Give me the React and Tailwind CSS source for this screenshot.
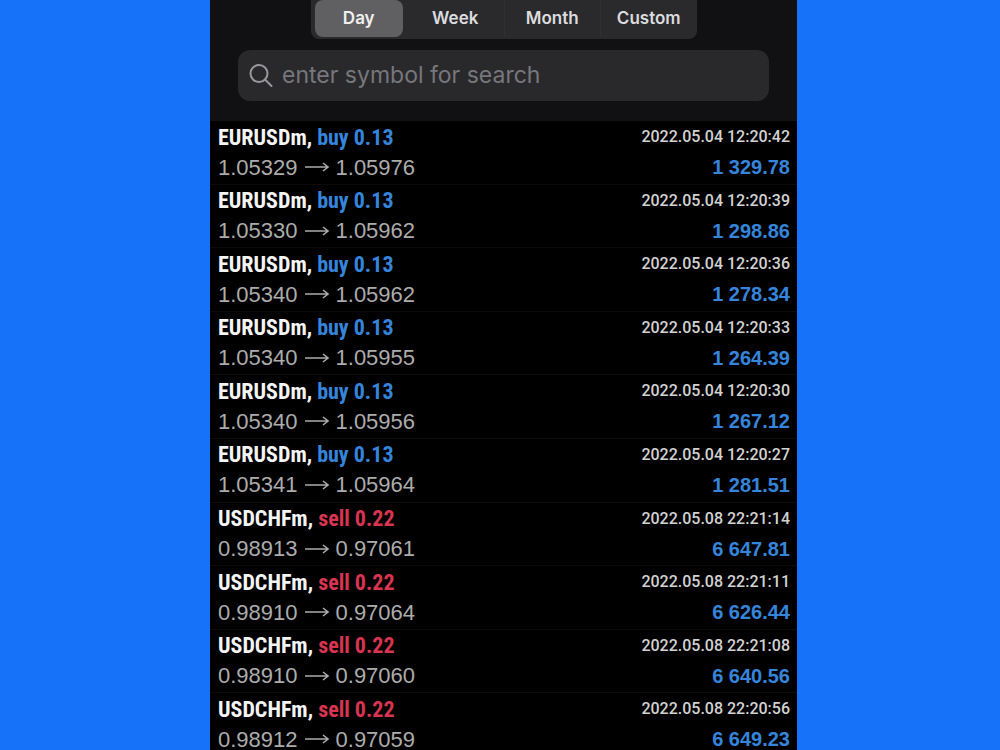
import React, { useState } from 'react';

const periods = ['Day', 'Week', 'Month', 'Custom'];

const deals = [
  { symbol: 'EURUSDm', side: 'buy', volume: '0.13', open: '1.05329', close: '1.05976', time: '2022.05.04 12:20:42', profit: '1 329.78' },
  { symbol: 'EURUSDm', side: 'buy', volume: '0.13', open: '1.05330', close: '1.05962', time: '2022.05.04 12:20:39', profit: '1 298.86' },
  { symbol: 'EURUSDm', side: 'buy', volume: '0.13', open: '1.05340', close: '1.05962', time: '2022.05.04 12:20:36', profit: '1 278.34' },
  { symbol: 'EURUSDm', side: 'buy', volume: '0.13', open: '1.05340', close: '1.05955', time: '2022.05.04 12:20:33', profit: '1 264.39' },
  { symbol: 'EURUSDm', side: 'buy', volume: '0.13', open: '1.05340', close: '1.05956', time: '2022.05.04 12:20:30', profit: '1 267.12' },
  { symbol: 'EURUSDm', side: 'buy', volume: '0.13', open: '1.05341', close: '1.05964', time: '2022.05.04 12:20:27', profit: '1 281.51' },
  { symbol: 'USDCHFm', side: 'sell', volume: '0.22', open: '0.98913', close: '0.97061', time: '2022.05.08 22:21:14', profit: '6 647.81' },
  { symbol: 'USDCHFm', side: 'sell', volume: '0.22', open: '0.98910', close: '0.97064', time: '2022.05.08 22:21:11', profit: '6 626.44' },
  { symbol: 'USDCHFm', side: 'sell', volume: '0.22', open: '0.98910', close: '0.97060', time: '2022.05.08 22:21:08', profit: '6 640.56' },
  { symbol: 'USDCHFm', side: 'sell', volume: '0.22', open: '0.98912', close: '0.97059', time: '2022.05.08 22:20:56', profit: '6 649.23' },
];

const PeriodTabs = ({ value, onChange }) => (
  <div className="mx-auto grid h-[39px] w-[386px] max-w-full grid-cols-4 rounded-b-lg bg-[#2a2a2d] pb-0.5">
    {periods.map((period, i) => (
      <button
        key={period}
        type="button"
        aria-pressed={period === value}
        onClick={() => onChange(period)}
        className={`flex items-center justify-center ${period === value ? 'mx-1 rounded-lg bg-[#606063] text-[#f0f0f0]' : 'text-[#dcdcde]'} ${i > 1 ? 'border-l border-[#303033]' : ''}`}
      >
        {period}
      </button>
    ))}
  </div>
);

const SearchField = () => (
  <label className="mx-7 mt-[11px] flex h-[51px] items-center gap-2 rounded-xl bg-[#29292c] pl-2.5 pr-4">
    <svg viewBox="0 0 26 26" className="h-[26px] w-[26px] shrink-0" fill="none" stroke="#98989c" strokeWidth="2" strokeLinecap="round" aria-hidden="true">
      <circle cx="11" cy="10.5" r="8.5" />
      <path d="M17 16.5 23.5 23" />
    </svg>
    <input
      type="search"
      aria-label="enter symbol for search"
      placeholder="enter symbol for search"
      className="min-w-0 flex-1 bg-transparent text-[23px] text-white outline-none placeholder:text-[#77777c]"
    />
  </label>
);

const Arrow = () => (
  <svg viewBox="0 0 24 12" className="h-3 w-6 shrink-0" fill="none" stroke="#acacac" strokeWidth="1.5" role="img" aria-label="to">
    <path d="M0 6H23M18 2 23 6 18 10" />
  </svg>
);

const DealRow = ({ deal }) => (
  <li className="flex flex-col border-b border-[#0b0b0c] pl-2 pr-[7px] font-['Liberation_Sans',Arial,sans-serif]">
    <div className="flex h-8 items-center justify-between">
      <p className="font-['Roboto_Condensed','Liberation_Sans_Narrow','Liberation_Sans',sans-serif] text-[22px] font-bold text-[#f4f4f4]">
        {deal.symbol}, <span className={deal.side === 'buy' ? 'text-[#3585dc]' : 'text-[#d93450]'}>{deal.side} {deal.volume}</span>
      </p>
      <time className="font-['Roboto',sans-serif] text-base font-medium text-[#d2d2d2]">{deal.time}</time>
    </div>
    <div className="flex h-7 items-center justify-between">
      <p className="flex items-center gap-[7px] text-[22px] text-[#acacac]">
        {deal.open}
        <Arrow />
        {deal.close}
      </p>
      <span className="text-[20px] font-bold text-[#3585dc]">{deal.profit}</span>
    </div>
  </li>
);

const App = () => {
  const [period, setPeriod] = useState('Day');

  return (
    <div className="grid h-screen grid-cols-[210fr_587fr_203fr] overflow-hidden bg-[#1672f8]">
      <main className="col-start-2 bg-black">
        <header className="bg-[#111113] pb-5 font-['Inter',sans-serif] text-[17px] font-semibold">
          <PeriodTabs value={period} onChange={setPeriod} />
          <div className="font-normal">
            <SearchField />
          </div>
        </header>

        {/* Closed deals */}
        <ul className="grid min-h-[636px] auto-rows-fr">
          {deals.map((deal) => (
            <DealRow key={deal.time} deal={deal} />
          ))}
        </ul>
      </main>
    </div>
  );
};

export default App;
